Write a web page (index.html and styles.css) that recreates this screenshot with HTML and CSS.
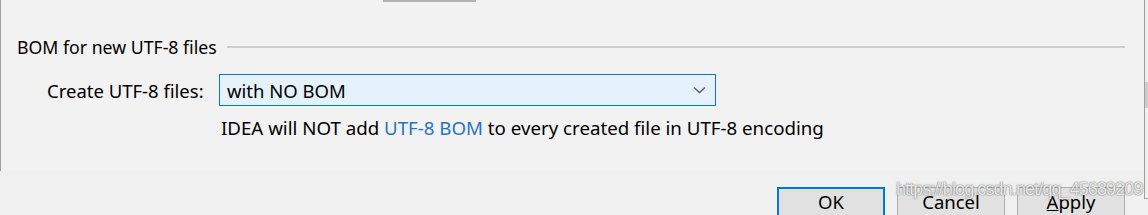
FILE: index.html
```html
<!DOCTYPE html>
<html>
<head>
<meta charset="utf-8">
<link rel="stylesheet" href="styles.css">
</head>
<body>
<div class="window">
  <div class="panel">
    <div class="top-stub"></div>
    <div class="group-title">
      <span class="group-text">BOM for new UTF-8 files</span>
      <span class="group-line"></span>
    </div>
    <div class="form-row">
      <span class="label">Create UTF-8 files:</span>
      <div class="combo">
        <span class="combo-text">with NO BOM</span>
        <svg class="chevron" width="13" height="8" viewBox="0 0 13 8"><path d="M1 1.5 L6.5 6.5 L12 1.5" fill="none" stroke="#5a5a5a" stroke-width="1.4"/></svg>
      </div>
    </div>
    <div class="desc">IDEA will NOT add <span class="link">UTF-8 BOM</span> to every created file in UTF-8 encoding</div>
  </div>
  <div class="footer">
    <div class="btn btn-default">OK</div>
    <div class="btn">Cancel</div>
    <div class="btn"><span class="u">A</span>pply</div>
  </div>
  <div class="edge"><div class="thumb"></div></div>
  <div class="watermark">https://blog.csdn.net/qq_45689209</div>
</div>
</body>
</html>
```
FILE: styles.css
```css
html, body {
  margin: 0;
  padding: 0;
  width: 1148px;
  height: 215px;
  overflow: hidden;
  background: #f0f0f0;
}
.window {
  position: relative;
  width: 1148px;
  height: 215px;
  font-family: "Noto Sans", "Open Sans", sans-serif;
  font-size: 18.5px;
  color: #000;
}
.panel {
  height: 171px;
  background: #f2f2f2;
  border-left: 1px solid #a0a0a0;
  box-sizing: border-box;
  display: flex;
  flex-direction: column;
}
.top-stub {
  margin-left: 382px;
  width: 93px;
  height: 2px;
  background: #b4b4b4;
}
.group-title {
  display: flex;
  align-items: center;
  height: 22px;
  margin-top: 34px;
  padding-left: 16px;
  padding-right: 23px;
}
.group-text {
  font-size: 17.7px;
  line-height: 22px;
  white-space: nowrap;
}
.group-line {
  flex: 1;
  margin-left: 10px;
  height: 2px;
  background: #cdcdcd;
}
.form-row {
  display: flex;
  align-items: center;
  margin-top: 16px;
  height: 32px;
}
.label {
  margin-left: 46px;
  width: 172px;
  white-space: nowrap;
}
.combo {
  width: 497px;
  height: 32px;
  box-sizing: border-box;
  border: 1px solid #0078d7;
  background: #e5f1fb;
  display: flex;
  align-items: center;
  justify-content: space-between;
  padding: 0 9px 0 7px;
}
.chevron {
  display: block;
}
.desc {
  margin-top: 11px;
  margin-left: 220px;
  line-height: 22px;
  font-size: 18.7px;
  white-space: nowrap;
}
.link {
  color: #2675bf;
}
.footer {
  display: flex;
  gap: 12px;
  padding-left: 777px;
  padding-top: 16px;
  height: 44px;
  box-sizing: border-box;
}
.btn {
  width: 108px;
  height: 32px;
  flex: none;
  box-sizing: border-box;
  border: 1px solid #adadad;
  background: #e1e1e1;
  text-align: center;
  line-height: 28px;
  font-size: 18.5px;
}
.btn-default {
  border: 2px solid #0078d7;
  line-height: 26px;
}
.u {
  text-decoration: underline;
}
.edge {
  position: absolute;
  left: 1144px;
  top: 0;
  width: 4px;
  height: 199px;
  border-left: 1px solid #a0a0a0;
  border-bottom: 1px solid #a0a0a0;
  box-sizing: border-box;
  background: #f0f0f0;
}
.thumb {
  margin-top: 82px;
  height: 26px;
  background: #cdcdcd;
}
.watermark {
  position: absolute;
  left: 896px;
  top: 179px;
  font-family: "Liberation Sans", Arial, sans-serif;
  font-size: 18px;
  letter-spacing: -0.9px;
  color: rgba(255, 255, 255, 0.85);
  text-shadow: 0 0 1px rgba(90, 90, 90, 0.9), 0 0 2px rgba(120, 120, 120, 0.6);
  white-space: nowrap;
  pointer-events: none;
}
```
